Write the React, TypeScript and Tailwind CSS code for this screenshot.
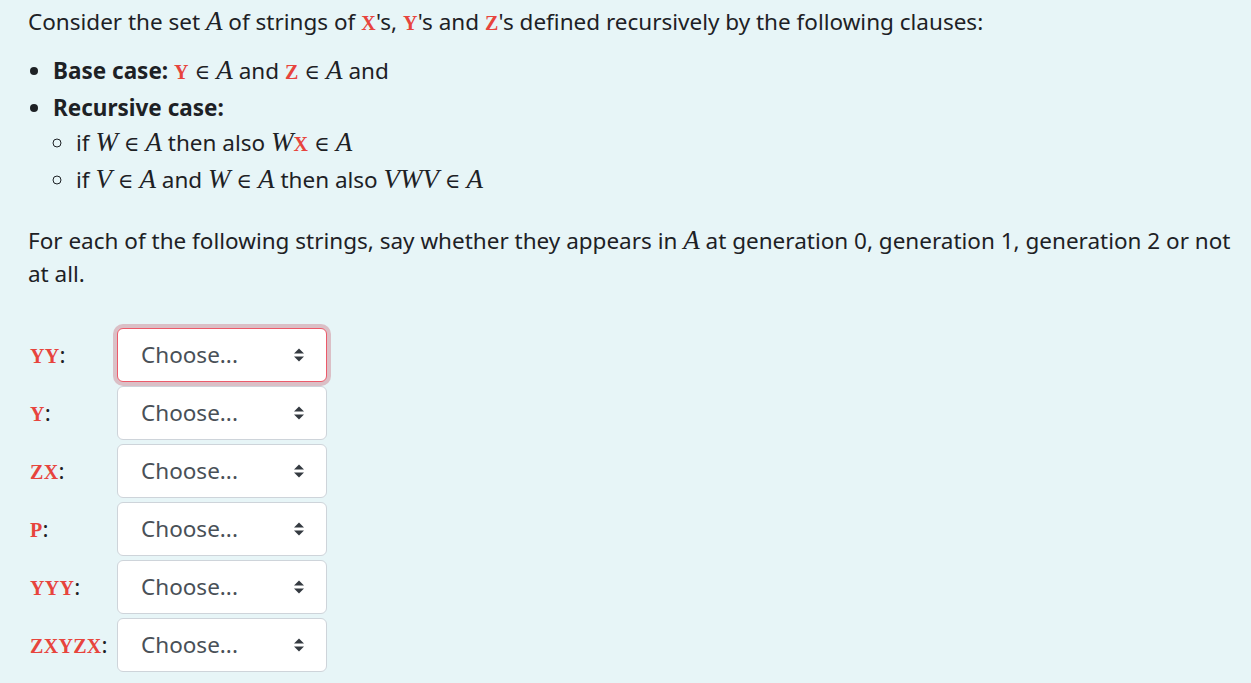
import React from "react";

const Code = ({ children }: { children: React.ReactNode }) => (
  <span className="text-[#e7443d] font-bold font-['Liberation_Serif'] text-[20px] tracking-[0.3px]">{children}</span>
);

const M = ({ children }: { children: React.ReactNode }) => (
  <span className="font-['Liberation_Serif'] italic text-[27px] leading-none">{children}</span>
);

const In = () => (
  <span className="font-['DejaVu_Serif'] text-[21px] mx-[6px] leading-none">∈</span>
);

const Arrows = () => (
  <svg width="12" height="16" viewBox="0 0 12 16" className="shrink-0">
    <path d="M1 6.5 L6 1.5 L11 6.5 Z" fill="#343a40" />
    <path d="M1 9.5 L6 14.5 L11 9.5 Z" fill="#343a40" />
  </svg>
);

const rows = ["YY", "Y", "ZX", "P", "YYY", "ZXYZX"];

export default function App() {
  return (
    <div className="min-h-[683px] w-full bg-[#e7f5f7] text-[#1d2125] font-['Noto_Sans'] text-[22.5px] pl-[28px] pt-[4px]">
      <div className="h-[36px] leading-[36px] whitespace-nowrap">
        Consider the set <M>A</M> of strings of <Code>X</Code>'s, <Code>Y</Code>'s and <Code>Z</Code>'s defined recursively by the following clauses:
      </div>
      <ul className="list-disc pl-[25px] mt-[13px]">
        <li>
          <div className="h-[36px] leading-[36px] whitespace-nowrap">
            <b>Base case:</b> <Code>Y</Code>
            <In />
            <M>A</M> and <Code>Z</Code>
            <In />
            <M>A</M> and
          </div>
        </li>
        <li>
          <div className="h-[36px] leading-[38px]">
            <b>Recursive case:</b>
          </div>
          <ul className="list-[circle] pl-[23px]">
            <li>
              <div className="h-[37px] leading-[36px] whitespace-nowrap">
                if <M>W</M>
                <In />
                <M>A</M> then also <M>W</M>
                <Code>X</Code>
                <In />
                <M>A</M>
              </div>
            </li>
            <li>
              <div className="h-[37px] leading-[36px] whitespace-nowrap">
                if <M>V</M>
                <In />
                <M>A</M> and <M>W</M>
                <In />
                <M>A</M> then also <M>VWV</M>
                <In />
                <M>A</M>
              </div>
            </li>
          </ul>
        </li>
      </ul>
      <p className="mt-[25px] leading-[33px] pr-[10px]">
        For each of the following strings, say whether they appears in <M>A</M> at generation 0, generation 1, generation 2 or not at all.
      </p>
      <div className="mt-[38px] flex flex-col gap-[4px]">
        {rows.map((r, i) => (
          <div key={r} className="flex items-center">
            <div className="w-[89px] pl-[2px]">
              <Code>{r}</Code>:
            </div>
            <div
              className={
                i === 0
                  ? "w-[210px] h-[54px] bg-white rounded-[6px] border border-[#ec5a6a] shadow-[0_0_0_4px_#dbbfc6] flex items-center justify-between pl-[23px] pr-[21px] text-[#495057]"
                  : "w-[210px] h-[54px] bg-white rounded-[6px] border border-[#ced4da] flex items-center justify-between pl-[23px] pr-[21px] text-[#495057]"
              }
            >
              <span>Choose...</span>
              <Arrows />
            </div>
          </div>
        ))}
      </div>
    </div>
  );
}
